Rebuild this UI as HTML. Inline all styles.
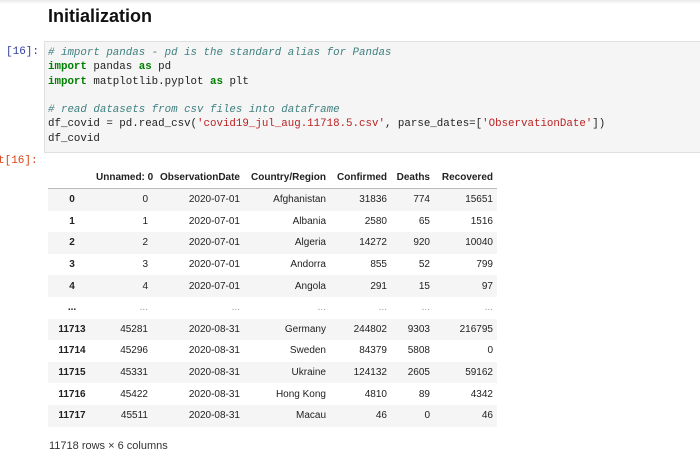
<!DOCTYPE html>
<html><head><style>
body{margin:0;width:700px;height:458px;background:#fff;position:relative;overflow:hidden;font-family:"Liberation Sans",Arial,sans-serif}
.top{position:absolute;left:0;top:0;width:700px;height:4px;background:linear-gradient(#e8e8e8,#fff)}
h1{position:absolute;left:48px;top:6px;margin:0;font-size:18px;font-weight:bold;color:#111}
.p{position:absolute;font-family:"Liberation Mono",monospace;font-size:11px;color:#303f9f}
.o{color:#d84315}
.cell{position:absolute;left:44px;top:41px;width:670px;height:110px;background:#f5f5f5;border:1px solid #e0e0e0}
pre{position:absolute;left:48px;top:46px;margin:0;font-family:"Liberation Mono",monospace;font-size:10.8px;line-height:14.3px;color:#222}
.c{color:#408080;font-style:italic}.k{color:#008000;font-weight:bold}.s{color:#ba2121}
table{position:absolute;left:48px;top:167px;border-collapse:collapse;font-size:10px;color:#222;width:449px;table-layout:fixed}
th,td{text-align:right;padding:0 4px;height:21.6px;white-space:nowrap}
thead th{height:21px;border-bottom:1px solid #bbb;font-weight:bold}
tbody th{text-align:center;font-weight:bold}
tbody tr.g{background:#f5f5f5}
td.d,th.d{color:#999}
.f{position:absolute;left:49px;top:440px;font-size:11px;color:#333}
</style></head><body>
<div class="top"></div>
<h1>Initialization</h1>
<div class="p" style="left:6px;top:46px">[16]:</div>
<div class="cell"></div>
<pre><span class="c"># import pandas - pd is the standard alias for Pandas</span>
<span class="k">import</span> pandas <span class="k">as</span> pd
<span class="k">import</span> matplotlib.pyplot <span class="k">as</span> plt

<span class="c"># read datasets from csv files into dataframe</span>
df_covid = pd.read_csv(<span class="s">'covid19_jul_aug.11718.5.csv'</span>, parse_dates=[<span class="s">'ObservationDate'</span>])
df_covid</pre>
<div class="p o" style="left:-2px;top:155px">t[16]:</div>
<table>
<colgroup><col style="width:48px"><col style="width:56px"><col style="width:92px"><col style="width:86px"><col style="width:61px"><col style="width:43px"><col style="width:63px"></colgroup>
<thead><tr><th></th><th style="padding:0 4px 0 0">Unnamed: 0</th><th>ObservationDate</th><th>Country/Region</th><th>Confirmed</th><th>Deaths</th><th>Recovered</th></tr></thead>
<tbody>
<tr class="g"><th>0</th><td>0</td><td>2020-07-01</td><td>Afghanistan</td><td>31836</td><td>774</td><td>15651</td></tr>
<tr><th>1</th><td>1</td><td>2020-07-01</td><td>Albania</td><td>2580</td><td>65</td><td>1516</td></tr>
<tr class="g"><th>2</th><td>2</td><td>2020-07-01</td><td>Algeria</td><td>14272</td><td>920</td><td>10040</td></tr>
<tr><th>3</th><td>3</td><td>2020-07-01</td><td>Andorra</td><td>855</td><td>52</td><td>799</td></tr>
<tr class="g"><th>4</th><td>4</td><td>2020-07-01</td><td>Angola</td><td>291</td><td>15</td><td>97</td></tr>
<tr><th>...</th><td class="d">...</td><td class="d">...</td><td class="d">...</td><td class="d">...</td><td class="d">...</td><td class="d">...</td></tr>
<tr class="g"><th>11713</th><td>45281</td><td>2020-08-31</td><td>Germany</td><td>244802</td><td>9303</td><td>216795</td></tr>
<tr><th>11714</th><td>45296</td><td>2020-08-31</td><td>Sweden</td><td>84379</td><td>5808</td><td>0</td></tr>
<tr class="g"><th>11715</th><td>45331</td><td>2020-08-31</td><td>Ukraine</td><td>124132</td><td>2605</td><td>59162</td></tr>
<tr><th>11716</th><td>45422</td><td>2020-08-31</td><td>Hong Kong</td><td>4810</td><td>89</td><td>4342</td></tr>
<tr class="g"><th>11717</th><td>45511</td><td>2020-08-31</td><td>Macau</td><td>46</td><td>0</td><td>46</td></tr>
</tbody></table>
<div class="f">11718 rows × 6 columns</div>
</body></html>
